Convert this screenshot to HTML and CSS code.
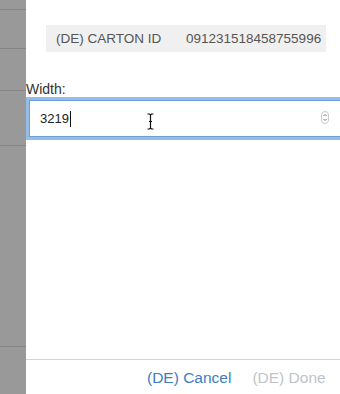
FILE: index.html
```html
<!DOCTYPE html>
<html lang="en">
<head>
    <meta charset="UTF-8">
    <meta name="viewport" content="width=device-width, initial-scale=1.0">
    <title>Edit Width</title>
    <link rel="stylesheet" href="styles.css">
</head>
<body>
    <div class="screen">
        <div class="sidebar">
            <div class="side-row r1"></div>
            <div class="side-row r2"></div>
            <div class="side-row r3"></div>
            <div class="side-row r4"></div>
            <div class="side-row r5"></div>
        </div>

        <div class="panel">
            <div class="info-box">
                <span class="info-label">(DE) CARTON ID</span>
                <span class="info-value">091231518458755996</span>
            </div>

            <label class="field-label">Width:</label>
            <div class="field">
                <span class="field-text">3219</span><span class="caret"></span>
                <span class="spinner">
                    <svg width="8" height="13" viewBox="0 0 8 13">
                        <rect x="0.5" y="0.5" width="7" height="12" rx="3.5" fill="#fff" stroke="#c8c8c8"/>
                        <path d="M2.5 5 L4 3.5 L5.5 5" fill="none" stroke="#666" stroke-width="0.9"/>
                        <path d="M2.5 8 L4 9.5 L5.5 8" fill="none" stroke="#666" stroke-width="0.9"/>
                    </svg>
                </span>
                <!-- mouse pointer sitting over the field -->
                <svg class="ibeam" width="7" height="17" viewBox="0 0 7 17">
                    <path d="M0.5 1 H2.5 L3.5 2 L4.5 1 H6.5 M3.5 2 V15 M0.5 16 H2.5 L3.5 15 L4.5 16 H6.5 M2 8.5 H5" fill="none" stroke="#111" stroke-width="1.2"/>
                </svg>
            </div>

            <div class="spacer"></div>

            <div class="footer">
                <button class="btn btn-cancel">(DE) Cancel</button>
                <button class="btn btn-done" disabled>(DE) Done</button>
            </div>
        </div>
    </div>
</body>
</html>
```

FILE: styles.css
```css
* {
    margin: 0;
    padding: 0;
    box-sizing: border-box;
}

body {
    font-family: 'Liberation Sans', Arial, sans-serif;
    background: #ffffff;
    width: 340px;
    height: 394px;
    overflow: hidden;
}

.screen {
    display: flex;
    width: 340px;
    height: 394px;
}

.sidebar {
    width: 26px;
    flex-shrink: 0;
    background: #999999;
    display: flex;
    flex-direction: column;
}

.side-row {
    border-bottom: 1px solid #858585;
}

.r1 { height: 10px; }
.r2 { height: 39px; }
.r3 { height: 42px; }
.r4 { height: 55px; }
.r5 { height: 201px; }

.panel {
    flex: 1;
    display: flex;
    flex-direction: column;
    min-width: 0;
    padding-top: 25px;
}

.info-box {
    margin-left: 20px;
    width: 280px;
    height: 27px;
    background: #f0f0f0;
    display: flex;
    align-items: center;
    padding-left: 10px;
    font-size: 13.5px;
    color: #555555;
}

.info-label {
    width: 130px;
}

.info-value {
    white-space: nowrap;
}

.field-label {
    display: block;
    margin-top: 30px;
    font-size: 14px;
    line-height: 15px;
    color: #333333;
}

.field {
    position: relative;
    width: 330px;
    height: 43px;
    border: 3px solid #93bce6;
    box-shadow: inset 0 0 0 1px #6d9ed4;
    display: flex;
    align-items: center;
    padding-left: 11px;
    font-size: 13px;
    color: #222222;
}

.caret {
    display: inline-block;
    width: 1px;
    height: 16px;
    background: #111111;
    margin-left: 1px;
}

.spinner {
    position: absolute;
    left: 292px;
    top: 11px;
    display: flex;
}

.ibeam {
    position: absolute;
    left: 118px;
    top: 13px;
}

.spacer {
    flex: 1;
}

.footer {
    height: 35px;
    border-top: 1px solid #d4d4d4;
    display: flex;
    align-items: center;
    padding-left: 121px;
    gap: 21px;
}

.btn {
    background: none;
    border: none;
    font-family: 'Liberation Sans', Arial, sans-serif;
    font-size: 15.5px;
    white-space: nowrap;
    padding-top: 2px;
}

.btn-cancel {
    color: #3b7dc0;
}

.btn-done {
    color: #c0c4c9;
}
```
